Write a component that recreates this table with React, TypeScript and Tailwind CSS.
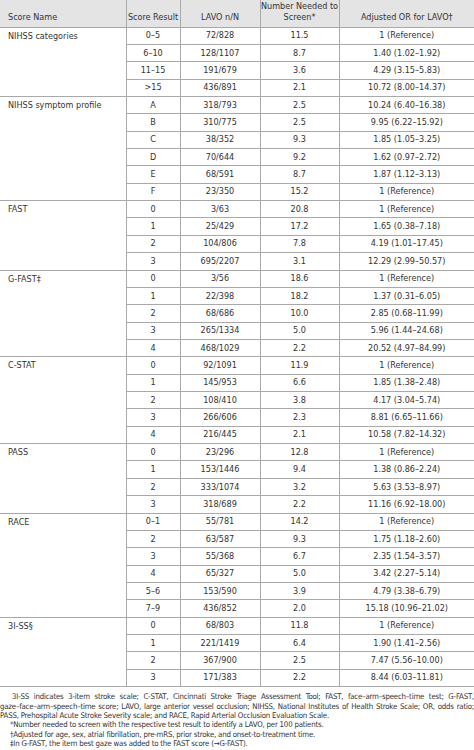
const groups: { name: string; rows: string[][] }[] = [
  {
    name: "NIHSS categories",
    rows: [
      ["0–5", "72/828", "11.5", "1 (Reference)"],
      ["6–10", "128/1107", "8.7", "1.40 (1.02–1.92)"],
      ["11–15", "191/679", "3.6", "4.29 (3.15–5.83)"],
      [">15", "436/891", "2.1", "10.72 (8.00–14.37)"],
    ],
  },
  {
    name: "NIHSS symptom profile",
    rows: [
      ["A", "318/793", "2.5", "10.24 (6.40–16.38)"],
      ["B", "310/775", "2.5", "9.95 (6.22–15.92)"],
      ["C", "38/352", "9.3", "1.85 (1.05–3.25)"],
      ["D", "70/644", "9.2", "1.62 (0.97–2.72)"],
      ["E", "68/591", "8.7", "1.87 (1.12–3.13)"],
      ["F", "23/350", "15.2", "1 (Reference)"],
    ],
  },
  {
    name: "FAST",
    rows: [
      ["0", "3/63", "20.8", "1 (Reference)"],
      ["1", "25/429", "17.2", "1.65 (0.38–7.18)"],
      ["2", "104/806", "7.8", "4.19 (1.01–17.45)"],
      ["3", "695/2207", "3.1", "12.29 (2.99–50.57)"],
    ],
  },
  {
    name: "G-FAST‡",
    rows: [
      ["0", "3/56", "18.6", "1 (Reference)"],
      ["1", "22/398", "18.2", "1.37 (0.31–6.05)"],
      ["2", "68/686", "10.0", "2.85 (0.68–11.99)"],
      ["3", "265/1334", "5.0", "5.96 (1.44–24.68)"],
      ["4", "468/1029", "2.2", "20.52 (4.97–84.99)"],
    ],
  },
  {
    name: "C-STAT",
    rows: [
      ["0", "92/1091", "11.9", "1 (Reference)"],
      ["1", "145/953", "6.6", "1.85 (1.38–2.48)"],
      ["2", "108/410", "3.8", "4.17 (3.04–5.74)"],
      ["3", "266/606", "2.3", "8.81 (6.65–11.66)"],
      ["4", "216/445", "2.1", "10.58 (7.82–14.32)"],
    ],
  },
  {
    name: "PASS",
    rows: [
      ["0", "23/296", "12.8", "1 (Reference)"],
      ["1", "153/1446", "9.4", "1.38 (0.86–2.24)"],
      ["2", "333/1074", "3.2", "5.63 (3.53–8.97)"],
      ["3", "318/689", "2.2", "11.16 (6.92–18.00)"],
    ],
  },
  {
    name: "RACE",
    rows: [
      ["0–1", "55/781", "14.2", "1 (Reference)"],
      ["2", "63/587", "9.3", "1.75 (1.18–2.60)"],
      ["3", "55/368", "6.7", "2.35 (1.54–3.57)"],
      ["4", "65/327", "5.0", "3.42 (2.27–5.14)"],
      ["5–6", "153/590", "3.9", "4.79 (3.38–6.79)"],
      ["7–9", "436/852", "2.0", "15.18 (10.96–21.02)"],
    ],
  },
  {
    name: "3I-SS§",
    rows: [
      ["0", "68/803", "11.8", "1 (Reference)"],
      ["1", "221/1419", "6.4", "1.90 (1.41–2.56)"],
      ["2", "367/900", "2.5", "7.47 (5.56–10.00)"],
      ["3", "171/383", "2.2", "8.44 (6.03–11.81)"],
    ],
  },
]

const font = { fontFamily: '"Liberation Sans Narrow", "DejaVu Sans Condensed", "Arial Narrow", sans-serif' }

export default function App() {
  return (
    <div className="w-[474px] bg-white text-[#333]" style={font}>
      <table className="w-[474px] table-fixed border-collapse text-[9px]">
        <colgroup>
          <col className="w-[126px]" />
          <col className="w-[54px]" />
          <col className="w-[80px]" />
          <col className="w-[79px]" />
          <col className="w-[135px]" />
        </colgroup>
        <thead>
          <tr className="bg-[#e4e4e4]">
            <th className="h-[27px] border-b border-[#a9a9a9] pb-[4px] pl-[8px] text-left align-bottom font-normal leading-[11px]">
              Score Name
            </th>
            <th className="border-b border-l border-[#a9a9a9] pb-[4px] text-center align-bottom font-normal leading-[11px]">
              Score Result
            </th>
            <th className="border-b border-l border-[#a9a9a9] pb-[4px] text-center align-bottom font-normal leading-[11px]">
              LAVO n/N
            </th>
            <th className="border-b border-l border-[#a9a9a9] pb-[4px] text-center align-bottom font-normal leading-[11px]">
              Number Needed to
              <br />
              Screen*
            </th>
            <th className="border-b border-l border-[#a9a9a9] pb-[4px] text-center align-bottom font-normal leading-[11px]">
              Adjusted OR for LAVO†
            </th>
          </tr>
        </thead>
        <tbody>
          {groups.map((g) =>
            g.rows.map((r, i) => (
              <tr key={g.name + i} className="h-[17.37px]">
                {i === 0 && (
                  <td rowSpan={g.rows.length} className="border-b border-[#a9a9a9] pl-[8px] pt-[4px] align-top leading-[9px]">
                    {g.name}
                  </td>
                )}
                {r.map((c, j) => (
                  <td key={j} className="border-b border-l border-[#a9a9a9] p-0 text-center leading-[9px]">
                    {c}
                  </td>
                ))}
              </tr>
            ))
          )}
        </tbody>
      </table>

      {/* notas */}
      <div className="mt-[5px] text-[7.8px] leading-[9.4px] tracking-[-0.2px]">
        <p className="text-justify indent-[12px] [text-align-last:justify]">
          3I-SS indicates 3-item stroke scale; C-STAT, Cincinnati Stroke Triage Assessment Tool; FAST, face–arm–speech–time test; G-FAST,
        </p>
        <p className="text-justify [text-align-last:justify]">
          gaze–face–arm–speech–time score; LAVO, large anterior vessel occlusion; NIHSS, National Institutes of Health Stroke Scale; OR, odds ratio;
        </p>
        <p>PASS, Prehospital Acute Stroke Severity scale; and RACE, Rapid Arterial Occlusion Evaluation Scale.</p>
        <p className="indent-[10px]">*Number needed to screen with the respective test result to identify a LAVO, per 100 patients.</p>
        <p className="indent-[10px]">†Adjusted for age, sex, atrial fibrillation, pre-mRS, prior stroke, and onset-to-treatment time.</p>
        <p className="indent-[10px]">‡In G-FAST, the item best gaze was added to the FAST score (→G-FAST).</p>
      </div>
    </div>
  )
}
